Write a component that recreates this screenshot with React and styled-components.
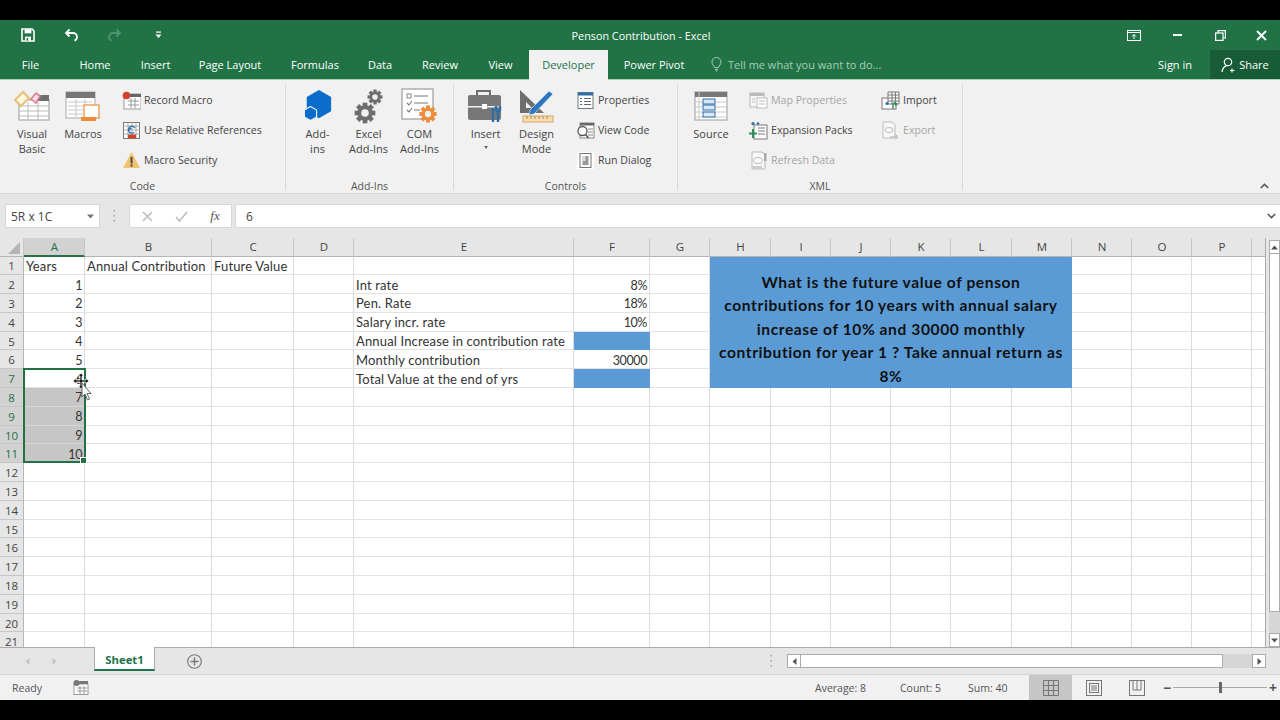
import React from "react";
import styled, { createGlobalStyle } from "styled-components";

const Global = createGlobalStyle`
  html, body { margin: 0; padding: 0; background: #000; }
  #root { width: 1280px; height: 720px; overflow: hidden; }
`;
const UI = `"Open Sans", "Noto Sans", "Liberation Sans", sans-serif`;
const CELL = `Lato, "Open Sans", "Liberation Sans", sans-serif`;

const Page = styled.div`
  width: 1280px; height: 720px; background: #000;
  display: flex; flex-direction: column; padding: 20px 0; box-sizing: border-box;
  font-family: ${UI}; overflow: hidden;
`;
const TitleBar = styled.div`height: 30px; background: #217346; color: #fff; display: flex; align-items: center; flex: none;`;
const Qat = styled.div`display: flex; align-items: center; width: 175px; flex: none; padding-left: 6px; box-sizing: border-box;`;
const QatBtn = styled.div`width: 43.5px; display: flex; justify-content: center; flex: none;`;
const DocTitle = styled.div`flex: 1; text-align: center; font-size: 10.8px; padding-right: 5px;`;
const WinBtns = styled.div`display: flex; align-items: center; width: 168px; flex: none;`;
const WinBtn = styled.div`width: ${p => p.$w || 43.5}px; flex: none; display: flex; justify-content: center;`;

const TabBar = styled.div`height: 29px; background: #217346; display: flex; flex: none; color: #fff; font-size: 11px; align-items: stretch; border-bottom: 1px solid #a9d3bb;`;
const Tab = styled.div`
  width: ${p => p.$w}px; flex: none; display: flex; align-items: center; justify-content: center; box-sizing: border-box;
  ${p => p.$active && `background:#f1f1f1; color:#217346; margin-bottom:-1px; padding-bottom:1px;`}
`;
const TellMe = styled.div`display: flex; align-items: center; gap: 6px; margin-left: 11px; color: #a6cdb7; font-size: 11px; flex: none;`;
const Spacer = styled.div`flex: 1;`;
const SignIn = styled.div`display: flex; align-items: center; font-size: 11px; margin-right: 18px;`;
const Share = styled.div`width: 70px; background: #185c37; display: flex; align-items: center; gap: 3px; justify-content: center; font-size: 11px;`;

const Ribbon = styled.div`height: 114px; background: #f1f1f1; display: flex; flex: none; color: #444; border-bottom: 1px solid #d9d9d9; position: relative; box-sizing: border-box;`;
const Group = styled.div`
  width: ${p => p.$w}px; flex: none; box-sizing: border-box; border-right: 1px solid #d9d9d9;
  margin: 4px 0 3px; display: flex; flex-direction: column;
`;
const GroupBody = styled.div`flex: 1; display: flex; padding-left: ${p => p.$pl || 0}px; min-height: 0;`;
const GroupLabel = styled.div`height: 18px; padding-top: 7px; box-sizing: border-box; text-align: center; font-size: 10.5px; color: #555; line-height: 14px;`;
const Big = styled.div`
  width: ${p => p.$w}px; flex: none; display: flex; flex-direction: column; align-items: center;
  font-size: 11px; line-height: 15px; color: #444; text-align: center; padding-top: 5px; box-sizing: border-box;
`;
const BigIcon = styled.div`height: 34px; margin-bottom: 3px; display: flex; align-items: center; justify-content: center; flex: none;`;
const Stack = styled.div`display: flex; flex-direction: column; margin-left: ${p => p.$ml || 0}px; width: ${p => p.$w ? p.$w + "px" : "auto"}; padding-top: 1px; flex: none;`;
const Small = styled.div`
  height: 30px; flex: none; display: flex; align-items: center; gap: 3px; font-size: 10.6px; white-space: nowrap;
  color: ${p => p.$off ? "#a5a5a5" : "#444"};
  svg { width: 19px; height: 19px; flex: none; }
`;
const Caret = styled.div`width: 0; height: 0; border: 2.5px solid transparent; border-top: 3px solid #666; margin-top: 5px;`;
const Collapse = styled.div`position: absolute; right: 11px; bottom: 4px; line-height: 0;`;

const FormulaRow = styled.div`height: 44px; background: #e6e6e6; flex: none; display: flex; padding-top: 10px; box-sizing: border-box; align-items: flex-start;`;
const NameBox = styled.div`
  margin-left: 5px; width: 95px; height: 24px; background: #fff; border: 1px solid #d6d6d6; box-sizing: border-box; flex: none;
  display: flex; align-items: center; justify-content: space-between; padding: 0 5px; font-size: 12px; color: #444;
`;
const Dots = styled.div`width: 29px; display: flex; justify-content: center; padding-top: 5px; flex: none;`;
const FxBox = styled.div`width: 103px; height: 24px; background: #fff; border: 1px solid #d6d6d6; box-sizing: border-box; display: grid; grid-template-columns: repeat(3, 34px); align-items: center; justify-items: center; flex: none;`;
const FxSym = styled.span`font-family: "Liberation Serif", serif; font-style: italic; font-size: 13px; color: #555;`;
const FormulaInput = styled.div`
  flex: 1; height: 24px; margin-left: 3px; background: #fff; border: 1px solid #d6d6d6; border-right: none; box-sizing: border-box;
  display: flex; align-items: center; justify-content: space-between; padding: 0 4px 0 10px; font-size: 12px; color: #444;
`;

const SheetArea = styled.div`height: 409px; flex: none; background: #e6e6e6; display: flex; overflow: hidden; position: relative;`;
const Sheet = styled.div`
  width: 1266px; flex: none; height: 409px; overflow: hidden; display: grid; background: #fff;
  grid-template-columns: 24px 61px 127px 82px 60px 220px 76px 60px 61px 60px 60px 60px 61px 60px 60px 60px 60px 14px;
  grid-template-rows: 18.5px repeat(21, 18.8px);
  font-family: ${CELL}; font-size: 13px; color: #333;
  border-right: 1px solid #aaa; box-sizing: border-box;
`;
const Corner = styled.div`grid-area: 1 / 1; background: #e6e6e6; border-bottom: 1px solid #b5b5b5; border-right: 1px solid #c6c6c6; display: flex; align-items: flex-end; justify-content: flex-end; padding: 0 3px 2px 0; box-sizing: border-box;`;
const ColHead = styled.div`
  grid-row: 1; grid-column: ${p => p.$c}; background: ${p => p.$sel ? "#d2d2d2" : "#e6e6e6"}; color: ${p => p.$sel ? "#217346" : "#444"};
  border-right: 1px solid #c6c6c6; border-bottom: ${p => p.$sel ? "2px solid #217346" : "1px solid #b5b5b5"}; box-sizing: border-box;
  display: flex; align-items: center; justify-content: center; padding-left: 1px; font-family: ${UI}; font-size: 11.5px;
`;
const RowHead = styled.div`
  grid-column: 1; grid-row: ${p => p.$r}; background: ${p => p.$sel ? "#d2d2d2" : "#e6e6e6"}; color: ${p => p.$sel ? "#217346" : "#444"};
  border-right: 1px solid #b5b5b5; border-bottom: 1px solid #c6c6c6; box-sizing: border-box;
  display: flex; align-items: center; justify-content: center; padding-top: 1px; font-family: ${UI}; font-size: 11.5px;
`;
const Cell = styled.div`
  grid-row: ${p => p.$r}; grid-column: ${p => p.$c}; border-right: 1px solid #dcdcdc; border-bottom: 1px solid #e2e2e2; box-sizing: border-box;
  display: flex; align-items: center; justify-content: ${p => p.$num ? "flex-end" : "flex-start"}; padding: ${p => p.$num ? "2px 2px 0" : "1px 2px 0"};
  white-space: nowrap; min-width: 0; background: ${p => p.$bg || "transparent"};
  letter-spacing: ${p => p.$num ? "-0.4px" : "0.15px"};
  font-size: ${p => p.$num ? "12.5px" : "13px"};
  ${p => p.$bg === "#5b9bd5" && `border-color: #5b9bd5;`}
  ${p => p.$bg === "#c6c6c6" && `border-color: #d6d6d6;`}
`;
const Merged = styled.div`
  grid-row: 2 / span 7; grid-column: 9 / span 6; background: #5b9bd5; color: #111; font-weight: 700; font-size: 15.6px; letter-spacing: 0.58px; line-height: 23.4px;
  display: flex; align-items: flex-end; justify-content: center; text-align: center; padding: 0 7px; box-sizing: border-box; z-index: 1;
`;
const Selection = styled.div`
  grid-row: 8 / span 5; grid-column: 2; border: 2px solid #217346; margin: -1px -1px 0 -1px; z-index: 2; position: relative; pointer-events: none;
`;
const Handle = styled.div`position: absolute; right: -3px; bottom: -3px; width: 5px; height: 5px; background: #217346; border: 1px solid #fff;`;
const Pointer = styled.svg`position: absolute; left: 72px; top: 134px; z-index: 3;`;

const VScroll = styled.div`flex: 1; display: flex; flex-direction: column; padding: 2px 0 0 3px; background: #e6e6e6;`;
const VArrow = styled.div`height: 14px; background: #fff; border: 1px solid #ababab; box-sizing: border-box; display: flex; align-items: center; justify-content: center; flex: none;`;
const VThumb = styled.div`height: 358px; background: #fff; border: 1px solid #ababab; border-top: none; box-sizing: border-box; flex: none;`;
const VTrack = styled.div`flex: 1; background: #d6d6d6;`;

const TabsRow = styled.div`height: 26px; flex: none; background: #e6e6e6; border-top: 1px solid #ababab; display: flex; align-items: stretch;`;
const SheetNav = styled.div`width: 94px; display: flex; align-items: center; gap: 20px; padding-left: 24px; box-sizing: border-box; flex: none;`;
const SheetTab = styled.div`
  width: 61px; background: #fff; color: #217346; font-weight: 700; font-size: 11.3px; padding-top: 2px;
  display: flex; align-items: center; justify-content: center; box-sizing: border-box; border-left: 1px solid #ababab; border-right: 1px solid #ababab; border-bottom: 2px solid #217346; margin: -1px 0 3px; flex: none;
`;
const AddSheet = styled.div`width: 78px; display: flex; align-items: center; justify-content: center; flex: none;`;
const TabsFill = styled.div`flex: 1; display: flex; justify-content: flex-end; align-items: center; padding-right: 1px;`;
const HScroll = styled.div`width: 479px; height: 14px; display: flex; flex: none; align-self: center; margin: 0 14px 0 13px;`;
const HArrow = styled.div`width: 14px; background: #fff; border: 1px solid #ababab; box-sizing: border-box; display: flex; align-items: center; justify-content: center; flex: none;`;
const HThumb = styled.div`width: 422px; background: #fff; border: 1px solid #ababab; border-left: none; box-sizing: border-box; flex: none;`;
const HTrack = styled.div`flex: 1; background: #d6d6d6;`;

const Status = styled.div`height: 26px; flex: none; background: #f1f1f1; border-top: 1px solid #d6d6d6; box-sizing: border-box; display: flex; align-items: center; font-size: 10.5px; color: #555;`;
const Ready = styled.div`margin-left: 12px; width: 61px; flex: none;`;
const Stat = styled.div`width: ${p => p.$w}px; flex: none; white-space: nowrap;`;
const ViewBtn = styled.div`
  width: 43px; height: 100%; display: flex; align-items: center; justify-content: center; flex: none;
  background: ${p => p.$on ? "#c6c6c6" : "transparent"};
`;
const Zoom = styled.div`display: flex; align-items: center; width: 122px; flex: none; box-sizing: border-box; justify-content: space-between; padding: 0 3px 0 5px; font-size: 14px; font-weight: 700; color: #555;`;
const ZoomLine = styled.div`width: 94px; height: 1px; background: #a8a8a8; position: relative;`;
const ZoomKnob = styled.div`position: absolute; left: 46px; top: -5px; width: 3px; height: 11px; background: #666;`;

const Save = () => (
  <svg width="16" height="16" viewBox="0 0 16 16" fill="none">
    <path d="M2 2h10l2 2v10H2z" stroke="#fff" strokeWidth="1.6" />
    <rect x="4.6" y="2.4" width="6.8" height="4" fill="#fff" />
    <rect x="5" y="9.6" width="6" height="4" fill="#fff" />
    <rect x="6.5" y="11" width="1.6" height="2.6" fill="#217346" />
  </svg>
);
const Undo = () => (
  <svg width="15" height="14" viewBox="0 0 15 14" fill="none" stroke="#fff" strokeWidth="1.8">
    <path d="M5.5 1.5 2 5l3.5 3.5" /><path d="M2.5 5H9a4 4 0 0 1 4 4c0 1.6-1 3-2.5 3.6" />
  </svg>
);
const Redo = () => (
  <svg width="15" height="14" viewBox="0 0 15 14" fill="none" stroke="#4f9670" strokeWidth="1.8">
    <path d="M9.5 1.5 13 5 9.5 8.5" /><path d="M12.5 5H6a4 4 0 0 0-4 4c0 1.6 1 3 2.5 3.6" />
  </svg>
);
const QatMore = () => (
  <svg width="7" height="8" viewBox="0 0 7 8" fill="#fff"><rect x="1" y="0.5" width="5" height="1.2" /><path d="M0.5 3.5h6L3.5 7z" /></svg>
);
const Bulb = () => (
  <svg width="11" height="15" viewBox="0 0 11 15" fill="none" stroke="#a6cdb7" strokeWidth="1">
    <path d="M3.5 10.5C3 8.5 1 7.6 1 5a4.500 4.500 0 0 1 9 0c0 2.600-2 3.500-2.500 5.500z" /><path d="M4 12.500h3M4.600 14h1.800" />
  </svg>
);
const ShareIcon = () => (
  <svg width="15" height="16" viewBox="0 0 15 16" fill="none" stroke="#fff" strokeWidth="1.2">
    <circle cx="7" cy="5" r="3.7" /><path d="M1 15c.4-3.4 2.4-5.600 4.600-6.400M11 11.500v4M9 13.500h4.600" />
  </svg>
);
const VisualBasicIcon = () => (
  <svg width="36" height="32" viewBox="0 0 36 32">
    <rect x="5" y="10" width="30" height="20" fill="#fff" stroke="#9a9a9a" />
    <rect x="22" y="5" width="13" height="6" fill="#6e6e6e" />
    <path d="M5 16h30M5 21h30M5 26h30M14 12v18M24 12v18" stroke="#bbb" />
    <path d="M1 10 9 2l6 6-8 8z" fill="#fff6dc" stroke="#e4c27a" strokeWidth="2" />
    <path d="M17 9l5-6 4 3-4 7z" fill="#fde" stroke="#d9808f" strokeWidth="1.6" />
  </svg>
);
const MacrosIcon = () => (
  <svg width="36" height="32" viewBox="0 0 36 32">
    <rect x="1" y="2" width="29" height="26" fill="#fff" stroke="#aaa" />
    <rect x="1" y="2" width="29" height="6" fill="#777" />
    <path d="M3 12h24M3 16h24M3 20h24M3 24h18M11 9v18M20 9v18" stroke="#c9c9c9" />
    <rect x="19" y="15" width="15" height="13" fill="#fff" stroke="#ed9b55" strokeWidth="1.4" />
    <rect x="16" y="27" width="15" height="4" fill="#ed8d3c" />
  </svg>
);
const RecordIcon = () => (
  <svg viewBox="0 0 19 19">
    <rect x="2" y="3" width="17" height="15" fill="#fff" stroke="#999" />
    <rect x="8" y="3" width="11" height="3" fill="#666" />
    <path d="M6 10h11M6 14h11M9 7v10M13 7v10" stroke="#999" />
    <circle cx="4.500" cy="4.500" r="3.800" fill="#d1432c" />
  </svg>
);
const RelativeIcon = () => (
  <svg viewBox="0 0 19 19">
    <rect x="1.500" y="1.500" width="16" height="16" fill="#fff" stroke="#777" />
    <path d="M1.500 5h16M1.500 9h16M1.500 13h16M6 1.500v16M10 1.500v16M14 1.500v16" stroke="#aaa" />
    <rect x="6" y="13.500" width="8" height="4" fill="#c9452f" />
    <path d="M13 7a3.500 3.500 0 1 0-1 4.500M7 6l.5 2.500 2-1.500" stroke="#2b6cb0" strokeWidth="1.200" fill="none" />
  </svg>
);
const SecurityIcon = () => (
  <svg viewBox="0 0 19 19">
    <path d="M9.500 1 18 17H1z" fill="#f0c46e" />
    <rect x="8.600" y="6" width="1.900" height="6.500" fill="#444" />
    <rect x="8.600" y="13.500" width="1.900" height="2" fill="#444" />
  </svg>
);
const Hex = ({ cx, cy, r }) => {
  const pts = [0, 1, 2, 3, 4, 5].map(i => {
    const a = (Math.PI / 3) * i - Math.PI / 2;
    return `${cx + r * Math.cos(a)},${cy + r * Math.sin(a)}`;
  }).join(" ");
  return <polygon points={pts} />;
};
const AddinsIcon = () => (
  <svg width="30" height="32" viewBox="0 0 32 34" fill="#0a6ccb">
    <Hex cx={17} cy={15} r={15} />
    <g stroke="#f1f1f1" strokeWidth="1.200"><Hex cx={8} cy={25} r={7.500} /></g>
  </svg>
);
const Gear = ({ x, y, r, c }) => (
  <g transform={`translate(${x} ${y})`}>
    {[0, 45, 90, 135].map(a => <rect key={a} x={-r * 1.15} y={-r * 0.26} width={r * 2.3} height={r * 0.52} fill={c} transform={`rotate(${a})`} />)}
    <circle r={r * 0.85} fill={c} />
    <circle r={r * 0.42} fill="#f1f1f1" />
  </g>
);
const ExcelAddinsIcon = () => (
  <svg width="30" height="36" viewBox="0 0 30 36"><Gear x={21} y={9} r={6.500} c="#6e6e6e" /><Gear x={11} y={25} r={9} c="#6e6e6e" /></svg>
);
const ComIcon = () => (
  <svg width="38" height="36" viewBox="0 0 38 36">
    <rect x="1" y="1" width="31" height="30" fill="#fff" stroke="#8a8a8a" />
    <rect x="6" y="6" width="4" height="4" fill="none" stroke="#888" />
    <path d="M13 8h14M13 15h14M13 22h6M6 15l2 2 3-4M6 22l2 2 3-4" stroke="#777" fill="none" strokeWidth="1.100" />
    <Gear x={27} y={26} r={7.500} c="#ed8d3c" />
  </svg>
);
const InsertIcon = () => (
  <svg width="38" height="36" viewBox="0 0 38 36">
    <path d="M10 7V3h13v4" fill="none" stroke="#6e6e6e" strokeWidth="2" />
    <rect x="1" y="7" width="33" height="25" rx="2" fill="#777" />
    <rect x="1" y="18" width="33" height="1.500" fill="#f1f1f1" />
    <rect x="15" y="16" width="5" height="5" fill="#fff" />
    <path d="M26 20v14M33 18v4l-2 2v10M29 18v4l2 2" stroke="#2c6da8" strokeWidth="2.400" fill="none" />
  </svg>
);
const DesignIcon = () => (
  <svg width="36" height="36" viewBox="0 0 36 36">
    <path d="M1 2v23h24z" fill="#6e6e6e" />
    <path d="M7 14v6h6z" fill="#f1f1f1" />
    <path d="M11 22 30 3l4 3-19 20-5 1z" fill="#2d77c2" stroke="#f1f1f1" strokeWidth=".6" />
    <rect x="4" y="28" width="30" height="6" fill="#f5dcb4" stroke="#d9a860" />
    <path d="M8 28v3M12 28v3M16 28v3M20 28v3M24 28v3M28 28v3" stroke="#b8893f" />
  </svg>
);
const PropsIcon = () => (
  <svg viewBox="0 0 19 19">
    <rect x="2" y="1.500" width="15" height="16" fill="#fff" stroke="#777" />
    <rect x="2" y="1.500" width="15" height="3" fill="#2c6da8" />
    <path d="M8 7.500h7M8 10.500h7M8 13.500h7" stroke="#666" />
    <path d="M4 7.500h2M4 10.500h2M4 13.500h2" stroke="#2c6da8" />
  </svg>
);
const ViewCodeIcon = () => (
  <svg viewBox="0 0 19 19">
    <rect x="4" y="2" width="14" height="15" fill="#fff" stroke="#888" />
    <rect x="4" y="2" width="14" height="2.500" fill="#666" />
    <path d="M12 8h5M12 11h5M12 14h5" stroke="#888" />
    <circle cx="6.500" cy="10" r="4.500" fill="#fff" stroke="#555" strokeWidth="1.300" />
    <path d="M9.500 13.500l3 3.500" stroke="#555" strokeWidth="1.600" />
  </svg>
);
const RunIcon = () => (
  <svg viewBox="0 0 19 19">
    <rect x="1" y="1" width="17" height="17" fill="#fff" />
    <rect x="4" y="2.500" width="11" height="14" fill="#fff" stroke="#777" />
    <rect x="6.500" y="5" width="6" height="9" fill="#999" />
    <rect x="6.500" y="5" width="3" height="5" fill="#ddd" />
  </svg>
);
const SourceIcon = () => (
  <svg width="34" height="30" viewBox="0 0 34 30">
    <rect x="1" y="1" width="32" height="28" fill="#fff" stroke="#999" />
    <rect x="1" y="1" width="32" height="5" fill="#777" />
    <path d="M5 1v28M1 11h32M1 16h32M1 21h32M1 26h32" stroke="#c9c9c9" />
    <rect x="9" y="8" width="12" height="5" fill="#dbe8f4" stroke="#2c6da8" />
    <rect x="9" y="14" width="12" height="5" fill="#dbe8f4" stroke="#2c6da8" />
    <rect x="9" y="21" width="12" height="5" fill="#dbe8f4" stroke="#2c6da8" />
  </svg>
);
const MapIcon = () => (
  <svg viewBox="0 0 19 19">
    <rect x="1" y="2" width="14" height="14" fill="#f6f6f6" stroke="#bbb" />
    <rect x="1" y="2" width="14" height="3" fill="#bbb" />
    <rect x="8" y="7" width="10" height="10" fill="#fff" stroke="#bbb" />
    <path d="M10 10h6M10 13h6M3 8h3M3 11h3" stroke="#bbb" />
  </svg>
);
const ExpansionIcon = () => (
  <svg viewBox="0 0 19 19">
    <rect x="5" y="4" width="13" height="14" fill="#fff" stroke="#777" />
    <path d="M9 7h7M9 10h7M9 13h7" stroke="#777" />
    <circle cx="4" cy="2.500" r="1.600" fill="#2c6da8" /><circle cx="9" cy="2.500" r="1.300" fill="#2c6da8" />
    <path d="M4 8v9M0 12.500h8" stroke="#2f8f5b" strokeWidth="2" />
  </svg>
);
const RefreshIcon = () => (
  <svg viewBox="0 0 19 19">
    <path d="M3 1h10l3 3v14H3z" fill="#f8f8f8" stroke="#bbb" />
    <ellipse cx="9" cy="9.500" rx="4.500" ry="3" fill="none" stroke="#bbb" />
    <rect x="15" y="2" width="2.500" height="8" fill="#aaa" />
    <rect x="3" y="15" width="10" height="3" fill="#ccc" />
  </svg>
);
const ImportIcon = () => (
  <svg viewBox="0 0 19 19">
    <rect x="1" y="7" width="14" height="11" fill="#fff" stroke="#777" />
    <path d="M7 1h11v12H7z" fill="#fff" stroke="#777" />
    <path d="M7 4h11M7 7h11M7 10h11M11 1v12M14.500 1v12" stroke="#777" />
    <circle cx="6" cy="12.500" r="1.600" fill="#2c6da8" />
    <path d="M12 18v-5l3-1M12.500 12l3 .5-1 2.500" stroke="#2f8f5b" strokeWidth="1.400" fill="none" />
  </svg>
);
const ExportIcon = () => (
  <svg viewBox="0 0 19 19">
    <path d="M2 1h9l3 3v13H2z" fill="#f8f8f8" stroke="#bbb" />
    <ellipse cx="8" cy="9" rx="4" ry="2.500" fill="none" stroke="#bbb" />
    <path d="M9 16h8M14.500 13.500 17 16l-2.500 2.500" stroke="#b5b5b5" fill="none" />
  </svg>
);
const Chevron = ({ up }) => (
  <svg width="9" height="6" viewBox="0 0 9 6" fill="none" stroke="#555" strokeWidth="1.500">
    <path d={up ? "M.8 5 4.500 1.400 8.200 5" : "M.8 1 4.500 4.600 8.200 1"} />
  </svg>
);
const Tri = ({ d = "up", c = "#555" }) => {
  const p = { up: "M0 5.500h7L3.500 1.500z", down: "M0 1.500h7L3.500 5.500z", left: "M5.500 0v7L1.500 3.500z", right: "M1.500 0v7l4-3.500z" }[d];
  return <svg width="7" height="7" viewBox="0 0 7 7"><path d={p} fill={c} /></svg>;
};
const VDots = () => (
  <svg width="3" height="14" viewBox="0 0 3 14" fill="#a0a0a0"><rect y="1" x=".5" width="1.500" height="1.500" /><rect y="6" x=".5" width="1.500" height="1.500" /><rect y="11" x=".5" width="1.500" height="1.500" /></svg>
);
const MacroStatus = () => (
  <svg width="16" height="15" viewBox="0 0 16 15">
    <rect x="1" y="4" width="14" height="10.500" fill="#fff" stroke="#999" />
    <rect x="6" y="1" width="9" height="3" fill="#777" />
    <circle cx="3.500" cy="3" r="3" fill="#777" />
    <path d="M4 8h10M4 11h10M7 6v8M11 6v8" stroke="#999" />
  </svg>
);
const NormalView = () => (
  <svg width="16" height="16" viewBox="0 0 16 16" fill="none" stroke="#777"><path d="M.5.5h15v15H.5zM.5 5.500h15M.5 10.500h15M5.500.5v15M10.500.5v15" /></svg>
);
const LayoutView = () => (
  <svg width="16" height="16" viewBox="0 0 16 16" fill="none" stroke="#777"><rect x=".5" y=".5" width="15" height="15" /><rect x="3.500" y="3.500" width="9" height="9" /><path d="M5 6h6M5 8h6M5 10h6" /></svg>
);
const BreakView = () => (
  <svg width="16" height="16" viewBox="0 0 16 16" fill="none" stroke="#777"><rect x=".5" y=".5" width="15" height="15" /><path d="M4 .5V10h8V.5M8 .5V10" /></svg>
);

const COLS = ["A", "B", "C", "D", "E", "F", "G", "H", "I", "J", "K", "L", "M", "N", "O", "P", ""];
const ROWS = Array.from({ length: 21 }, (_, i) => i + 1);
const GREY = "#c6c6c6";
const BLUE = "#5b9bd5";
const VALUES = {
  "1-0": { t: "Years" }, "1-1": { t: "Annual Contribution" }, "1-2": { t: "Future Value" },
  "2-0": { t: "1", n: 1 }, "3-0": { t: "2", n: 1 }, "4-0": { t: "3", n: 1 }, "5-0": { t: "4", n: 1 }, "6-0": { t: "5", n: 1 }, "7-0": { t: "6", n: 1 },
  "8-0": { t: "7", n: 1, bg: GREY }, "9-0": { t: "8", n: 1, bg: GREY }, "10-0": { t: "9", n: 1, bg: GREY }, "11-0": { t: "10", n: 1, bg: GREY },
  "2-4": { t: "Int rate" }, "3-4": { t: "Pen. Rate" }, "4-4": { t: "Salary incr. rate" },
  "5-4": { t: "Annual Increase in contribution rate" }, "6-4": { t: "Monthly contribution" }, "7-4": { t: "Total Value at the end of yrs" },
  "2-5": { t: "8%", n: 1 }, "3-5": { t: "18%", n: 1 }, "4-5": { t: "10%", n: 1 },
  "5-5": { t: "", bg: BLUE }, "6-5": { t: "30000", n: 1 }, "7-5": { t: "", bg: BLUE },
};

export default function App() {
  return (
    <Page>
      <Global />
      <TitleBar>
        <Qat>
          <QatBtn><Save /></QatBtn>
          <QatBtn><Undo /></QatBtn>
          <QatBtn><Redo /></QatBtn>
          <QatBtn><QatMore /></QatBtn>
        </Qat>
        <DocTitle>Penson Contribution - Excel</DocTitle>
        <WinBtns>
          <WinBtn><svg width="14" height="11" viewBox="0 0 14 11" fill="none" stroke="#fff"><rect x=".5" y=".5" width="13" height="10" /><path d="M.5 2.500h13" /><path d="M7 9V4.500M5 6.500 7 4.500l2 2" /></svg></WinBtn>
          <WinBtn><svg width="9" height="2" viewBox="0 0 9 2"><rect width="9" height="2" fill="#fff" /></svg></WinBtn>
          <WinBtn><svg width="11" height="11" viewBox="0 0 11 11" fill="none" stroke="#fff" strokeWidth="1.200"><rect x=".6" y="3" width="7.400" height="7.400" /><path d="M3 3V.6h7.400V8H8" /></svg></WinBtn>
          <WinBtn $w={37.5}><svg width="11" height="11" viewBox="0 0 11 11" stroke="#fff" strokeWidth="1.800"><path d="M1 1l9 9M10 1l-9 9" /></svg></WinBtn>
        </WinBtns>
      </TitleBar>
      <TabBar>
        <Tab $w={61}>File</Tab>
        <Tab $w={68}>Home</Tab>
        <Tab $w={53}>Insert</Tab>
        <Tab $w={96}>Page Layout</Tab>
        <Tab $w={74}>Formulas</Tab>
        <Tab $w={56}>Data</Tab>
        <Tab $w={64}>Review</Tab>
        <Tab $w={57}>View</Tab>
        <Tab $w={79} $active>Developer</Tab>
        <Tab $w={92}>Power Pivot</Tab>
        <TellMe><Bulb />Tell me what you want to do...</TellMe>
        <Spacer />
        <SignIn>Sign in</SignIn>
        <Share><ShareIcon />Share</Share>
      </TabBar>
      <Ribbon>
        <Group $w={286}>
          <GroupBody $pl={10}>
            <Big $w={44}><BigIcon><VisualBasicIcon /></BigIcon><span>Visual<br />Basic</span></Big>
            <Big $w={58}><BigIcon><MacrosIcon /></BigIcon><span>Macros</span></Big>
            <Stack $ml={10}>
              <Small><RecordIcon />Record Macro</Small>
              <Small><RelativeIcon />Use Relative References</Small>
              <Small><SecurityIcon />Macro Security</Small>
            </Stack>
          </GroupBody>
          <GroupLabel>Code</GroupLabel>
        </Group>
        <Group $w={168}>
          <GroupBody $pl={6}>
            <Big $w={51}><BigIcon><AddinsIcon /></BigIcon><span>Add-<br />ins</span></Big>
            <Big $w={51}><BigIcon><ExcelAddinsIcon /></BigIcon><span>Excel<br />Add-Ins</span></Big>
            <Big $w={51}><BigIcon><ComIcon /></BigIcon><span>COM<br />Add-Ins</span></Big>
          </GroupBody>
          <GroupLabel>Add-Ins</GroupLabel>
        </Group>
        <Group $w={224}>
          <GroupBody $pl={6}>
            <Big $w={51}><BigIcon><InsertIcon /></BigIcon><span>Insert</span><Caret /></Big>
            <Big $w={51}><BigIcon><DesignIcon /></BigIcon><span>Design<br />Mode</span></Big>
            <Stack $ml={14}>
              <Small><PropsIcon />Properties</Small>
              <Small><ViewCodeIcon />View Code</Small>
              <Small><RunIcon />Run Dialog</Small>
            </Stack>
          </GroupBody>
          <GroupLabel>Controls</GroupLabel>
        </Group>
        <Group $w={285}>
          <GroupBody $pl={8}>
            <Big $w={50}><BigIcon><SourceIcon /></BigIcon><span>Source</span></Big>
            <Stack $ml={13} $w={132}>
              <Small $off><MapIcon />Map Properties</Small>
              <Small><ExpansionIcon />Expansion Packs</Small>
              <Small $off><RefreshIcon />Refresh Data</Small>
            </Stack>
            <Stack>
              <Small><ImportIcon />Import</Small>
              <Small $off><ExportIcon />Export</Small>
            </Stack>
          </GroupBody>
          <GroupLabel>XML</GroupLabel>
        </Group>
        <Collapse><Chevron up /></Collapse>
      </Ribbon>
      <FormulaRow>
        <NameBox>5R x 1C<Tri d="down" c="#777" /></NameBox>
        <Dots><VDots /></Dots>
        <FxBox>
          <svg width="11" height="11" viewBox="0 0 11 11" stroke="#bdbdbd" strokeWidth="1.600"><path d="M1 1l9 9M10 1l-9 9" /></svg>
          <svg width="13" height="11" viewBox="0 0 13 11" fill="none" stroke="#bdbdbd" strokeWidth="1.600"><path d="M1 6l3.500 4L12 1" /></svg>
          <FxSym>fx</FxSym>
        </FxBox>
        <FormulaInput>6<Chevron /></FormulaInput>
      </FormulaRow>
      <SheetArea>
        <Sheet>
          <Corner><svg width="12" height="12" viewBox="0 0 12 12"><path d="M12 0v12H0z" fill="#b5b5b5" /></svg></Corner>
          {COLS.map((c, i) => <ColHead key={i} $c={i + 2} $sel={c === "A"}>{c}</ColHead>)}
          {ROWS.map(r => <RowHead key={r} $r={r + 1} $sel={r >= 7 && r <= 11}>{r}</RowHead>)}
          {ROWS.flatMap(r => COLS.map((_, i) => {
            const v = VALUES[`${r}-${i}`];
            return <Cell key={`${r}-${i}`} $r={r + 1} $c={i + 2} $num={v && v.n} $bg={v && v.bg}>{v && v.t}</Cell>;
          }))}
          <Merged>What is the future value of penson contributions for 10 years with annual salary increase of 10% and 30000 monthly contribution for year 1 ? Take annual return as 8%</Merged>
          <Selection><Handle /></Selection>
        </Sheet>
        <VScroll>
          <VArrow><Tri d="up" /></VArrow>
          <VThumb />
          <VTrack />
          <VArrow><Tri d="down" /></VArrow>
        </VScroll>
        <Pointer width="20" height="30" viewBox="0 0 20 30">
          <path d="M9 1 6.500 4H8v4H4V6.500L1 9l3 2.500V10h4v4H6.500L9 17l2.500-3H10v-4h4v1.500L17 9l-3-2.500V8h-4V4h1.500z" fill="#111" stroke="#fff" strokeWidth=".7" />
          <path d="M10 11v14l3-3 2.500 6 2-1-2.500-5.500H19z" fill="#fff" stroke="#555" strokeWidth=".9" />
        </Pointer>
      </SheetArea>
      <TabsRow>
        <SheetNav><Tri d="left" c="#c4c4c4" /><Tri d="right" c="#c4c4c4" /></SheetNav>
        <SheetTab>Sheet1</SheetTab>
        <AddSheet>
          <svg width="15" height="15" viewBox="0 0 15 15" fill="none" stroke="#777" strokeWidth="1.100"><circle cx="7.500" cy="7.500" r="6.800" /><path d="M7.500 3.500v8M3.500 7.500h8" strokeWidth="1.400" /></svg>
        </AddSheet>
        <TabsFill><VDots /></TabsFill>
        <HScroll>
          <HArrow><Tri d="left" /></HArrow>
          <HThumb />
          <HTrack />
          <HArrow><Tri d="right" /></HArrow>
        </HScroll>
      </TabsRow>
      <Status>
        <Ready>Ready</Ready>
        <MacroStatus />
        <Spacer />
        <Stat $w={85}>Average: 8</Stat>
        <Stat $w={68}>Count: 5</Stat>
        <Stat $w={61}>Sum: 40</Stat>
        <ViewBtn $on><NormalView /></ViewBtn>
        <ViewBtn><LayoutView /></ViewBtn>
        <ViewBtn><BreakView /></ViewBtn>
        <Zoom>
          <span>−</span>
          <ZoomLine><ZoomKnob /></ZoomLine>
          <span>+</span>
        </Zoom>
      </Status>
    </Page>
  );
}
